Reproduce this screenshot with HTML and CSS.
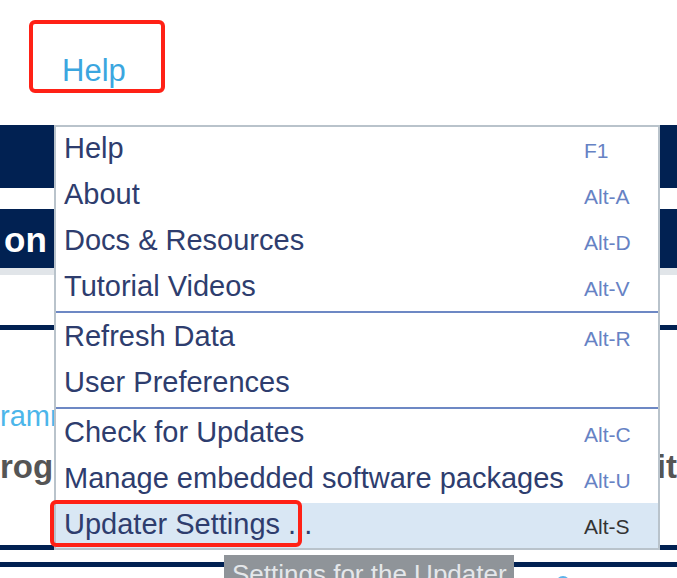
FILE: index.html
```html
<!DOCTYPE html>
<html>
<head>
<meta charset="utf-8">
<link rel="stylesheet" href="styles.css">
</head>
<body>
<div class="page">
  <header class="top">
    <div class="callout callout-help"><a class="help-link">Help</a></div>
  </header>
  <div class="band band-1"></div>
  <div class="band band-2"><span class="band-title">on</span></div>
  <div class="strip"></div>
  <div class="rule rule-a"></div>
  <div class="content">
    <div class="line-link"><span class="frag">ramm</span></div>
    <div class="line-bold"><span class="frag">rogr</span><span class="frag-right">it</span></div>
  </div>
  <div class="rule rule-b"></div>
  <div class="rule rule-c"></div>
  <div class="icon-row">
    <svg class="mini-icon" width="16" height="16" viewBox="0 0 16 16"><circle cx="8" cy="8" r="7" fill="#5cb3ea"/></svg>
  </div>

  <div class="menu">
    <div class="menu-group">
      <div class="menu-item"><span class="label">Help</span><span class="key">F1</span></div>
      <div class="menu-item"><span class="label">About</span><span class="key">Alt-A</span></div>
      <div class="menu-item"><span class="label">Docs &amp; Resources</span><span class="key">Alt-D</span></div>
      <div class="menu-item"><span class="label">Tutorial Videos</span><span class="key">Alt-V</span></div>
    </div>
    <div class="sep"></div>
    <div class="menu-group">
      <div class="menu-item"><span class="label">Refresh Data</span><span class="key">Alt-R</span></div>
      <div class="menu-item"><span class="label">User Preferences</span><span class="key"></span></div>
    </div>
    <div class="sep"></div>
    <div class="menu-group">
      <div class="menu-item"><span class="label">Check for Updates</span><span class="key">Alt-C</span></div>
      <div class="menu-item"><span class="label">Manage embedded software packages</span><span class="key">Alt-U</span></div>
      <div class="menu-item active"><span class="label">Updater Settings ...</span><span class="key">Alt-S</span></div>
    </div>
  </div>

  <div class="callout callout-updater"></div>
  <div class="tooltip">Settings for the Updater</div>
</div>
</body>
</html>
```
FILE: styles.css
```css
html, body {
  margin: 0;
  padding: 0;
  background: #ffffff;
}
body {
  width: 677px;
  height: 578px;
  overflow: hidden;
  font-family: "Liberation Sans", Arial, sans-serif;
}
.page {
  position: relative;
  width: 677px;
  height: 578px;
  overflow: hidden;
}
.top {
  height: 125px;
  padding-top: 20px;
  box-sizing: border-box;
}
.callout {
  border: 4px solid #ff2116;
  border-radius: 6px;
  box-sizing: border-box;
}
.callout-help {
  margin-left: 29px;
  width: 136px;
  height: 73px;
  padding: 31px 0 0 29px;
}
.help-link {
  display: block;
  font-size: 31px;
  line-height: 31px;
  color: #3ba6df;
}
.band {
  background: #012152;
}
.band-1 {
  height: 63px;
}
.band-2 {
  margin-top: 21px;
  height: 59px;
  padding: 3px 0 0 4px;
  box-sizing: border-box;
}
.band-title {
  color: #ffffff;
  font-weight: bold;
  font-size: 35px;
  line-height: 56px;
}
.strip {
  height: 7px;
  background: #e1e5e9;
}
.rule {
  height: 5px;
  background: #012152;
}
.rule-a {
  margin-top: 50px;
}
.content {
  padding-top: 66px;
  height: 215px;
  box-sizing: border-box;
}
.frag {
  display: inline-block;
  width: 54px;
  overflow: hidden;
  white-space: nowrap;
  vertical-align: top;
}
.line-link {
  font-size: 29px;
  line-height: 40px;
  color: #4cb6ea;
}
.line-bold {
  margin-top: 9px;
  display: flex;
  justify-content: space-between;
  font-size: 33px;
  line-height: 44px;
  font-weight: bold;
  color: #555555;
}
.frag-right {
  padding-right: 0;
}
.rule-c {
  margin-top: 12px;
}
.icon-row {
  padding: 8px 0 0 555px;
}
.mini-icon {
  display: block;
}

/* dropdown menu */
.menu {
  position: absolute;
  left: 54px;
  top: 125px;
  width: 606px;
  border: 2px solid #b9c3cb;
  box-sizing: border-box;
  background: #ffffff;
}
.menu-item {
  display: flex;
  align-items: baseline;
  height: 46px;
  padding-left: 8px;
  box-sizing: border-box;
}
.label {
  flex: 1;
  font-size: 29px;
  line-height: 42px;
  color: #2e3d6e;
}
.key {
  width: 74px;
  font-size: 21px;
  color: #6682c4;
}
.menu-item.active {
  background: #d9e7f4;
  height: 45px;
}
.menu-item.active .key {
  color: #333333;
}
.sep {
  height: 2px;
  background: #6d88c4;
  margin-bottom: 2px;
}

.callout-updater {
  position: absolute;
  left: 50px;
  top: 500px;
  width: 252px;
  height: 47px;
}
.tooltip {
  position: absolute;
  left: 224px;
  top: 555px;
  width: 290px;
  height: 40px;
  padding: 4px 0 0 8px;
  box-sizing: border-box;
  background: #8f9499;
  color: #e4e7ea;
  font-size: 26px;
  line-height: 30px;
  white-space: nowrap;
}
```
